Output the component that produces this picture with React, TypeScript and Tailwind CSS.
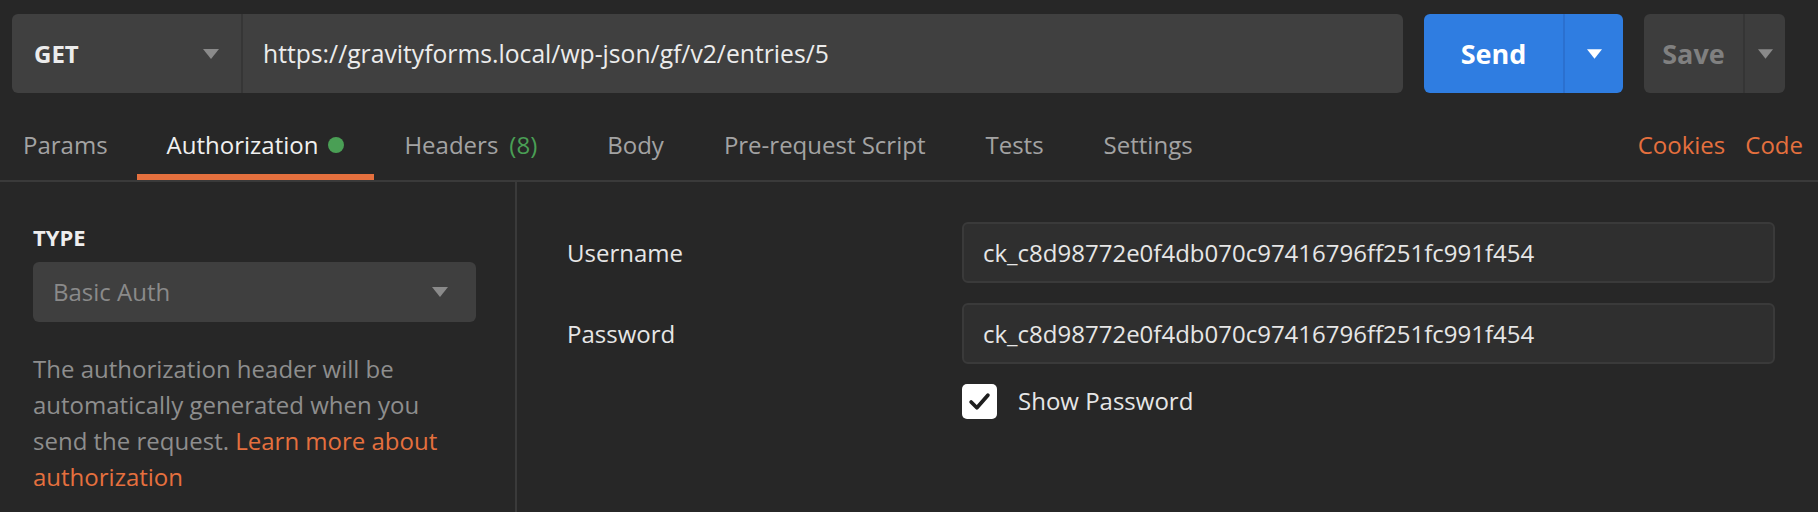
import type { ReactNode } from 'react';

const tabs: { label: string; extra?: ReactNode; active?: boolean; className?: string }[] = [
  { label: 'Params', className: 'pl-0 pr-[29px]' },
  {
    label: 'Authorization',
    active: true,
    extra: <span className="ml-[10px] inline-block h-4 w-4 rounded-full bg-[#4a9f55]" />,
  },
  { label: 'Headers', extra: <span className="ml-[11px] text-[#4a9f55]">(8)</span>, className: 'pl-[30px] pr-[40px]' },
  { label: 'Body' },
  { label: 'Pre-request Script' },
  { label: 'Tests' },
  { label: 'Settings' },
];

function Caret({ color, className = '' }: { color: string; className?: string }) {
  return (
    <svg width="16" height="10" viewBox="0 0 16 10" className={className}>
      <polygon points="0,0 16,0 8,10" fill={color} />
    </svg>
  );
}

const KEY = 'ck_c8d98772e0f4db070c97416796ff251fc991f454';

export default function App() {
  return (
    <div
      className="h-[512px] w-[1818px] overflow-hidden bg-[#272727] text-[24px] leading-[36px] text-[#e6e6e6]"
      style={{ fontFamily: '"Open Sans", "Noto Sans", sans-serif' }}
    >
      {/* request bar */}
      <div className="flex h-[93px] items-end pl-[12px] pr-[33px]">
        <div className="flex h-[79px] w-[1391px] rounded-[6px] bg-[#404040]">
          <div className="flex w-[231px] items-center justify-between border-r-2 border-[#363636] pl-[22px] pr-[22px]">
            <span className="font-bold text-[#ececec]">GET</span>
            <Caret color="#8a8a8a" />
          </div>
          <div className="flex flex-1 items-center pl-[20px] text-[24.7px] text-[#ececec]">
            https://gravityforms.local/wp-json/gf/v2/entries/5
          </div>
        </div>

        <div className="ml-[21px] flex h-[79px] w-[199px] rounded-[6px] bg-[#2f7de1]">
          <div className="flex w-[139px] items-center justify-center text-[27px] font-bold text-white">Send</div>
          <div className="flex flex-1 items-center justify-center border-l-2 border-[#2b70cf]">
            <Caret color="#ffffff" className="h-[10px] w-[15px]" />
          </div>
        </div>

        <div className="ml-[21px] flex h-[79px] w-[141px] rounded-[6px] bg-[#3d3d3d]">
          <div className="flex w-[99px] items-center justify-center text-[27px] font-bold text-[#808080]">Save</div>
          <div className="flex flex-1 items-center justify-center border-l-2 border-[#353535]">
            <Caret color="#8a8a8a" className="h-[10px] w-[15px]" />
          </div>
        </div>
      </div>

      {/* tabs */}
      <div className="flex h-[89px] items-end border-b-2 border-[#3a3a3a] pl-[23px] pr-[15px]">
        {tabs.map((t) => (
          <div
            key={t.label}
            className={`flex items-center border-b-[6px] pb-[11px] ${t.className ?? 'px-[30px]'} ${
              t.active ? 'border-[#e5703e] text-[#f0f0f0]' : 'border-transparent text-[#a3a3a3]'
            }`}
          >
            <span>{t.label}</span>
            {t.extra}
          </div>
        ))}
        <div className="ml-auto flex gap-[20px] pb-[17px] text-[#e5703e]">
          <span>Cookies</span>
          <span>Code</span>
        </div>
      </div>

      {/* body */}
      <div className="flex h-[330px]">
        <div className="w-[517px] shrink-0 border-r-2 border-[#3a3a3a] pl-[33px] pt-[39px]">
          <div className="text-[22px] leading-[33px] font-bold text-[#eeeeee]">TYPE</div>
          <div className="mt-[8px] flex h-[60px] w-[443px] items-center justify-between rounded-[6px] bg-[#3f3f3f] pl-[20px] pr-[28px] text-[#8a8a8a]">
            <span>Basic Auth</span>
            <Caret color="#8a8a8a" />
          </div>
          <p className="mt-[29px] w-[425px] text-[#8e8e8e]">
            The authorization header will be automatically generated when you send the request.{' '}
            <span className="text-[#e5703e]">Learn more about authorization</span>
          </p>
        </div>

        <div className="flex-1 pl-[50px] pr-[43px] pt-[40px]">
          <div className="grid grid-cols-[395px_1fr] items-center gap-y-[20px]">
            <span>Username</span>
            <div className="flex h-[61px] items-center rounded-[6px] border-2 border-[#3a3a3a] bg-[#2f2f2f] pl-[19px]">
              {KEY}
            </div>
            <span>Password</span>
            <div className="flex h-[61px] items-center rounded-[6px] border-2 border-[#3a3a3a] bg-[#2f2f2f] pl-[19px]">
              {KEY}
            </div>
            <span />
            <div className="-mt-[1px] flex items-center gap-[21px]">
              <span className="flex h-[35px] w-[35px] items-center justify-center rounded-[5px] bg-white">
                <svg width="23" height="19" viewBox="0 0 22 18">
                  <path d="M3 9.5 L8.5 15 L19 3" fill="none" stroke="#1e1e1e" strokeWidth="3.6" strokeLinecap="round" strokeLinejoin="round" />
                </svg>
              </span>
              <span>Show Password</span>
            </div>
          </div>
        </div>
      </div>
    </div>
  );
}
